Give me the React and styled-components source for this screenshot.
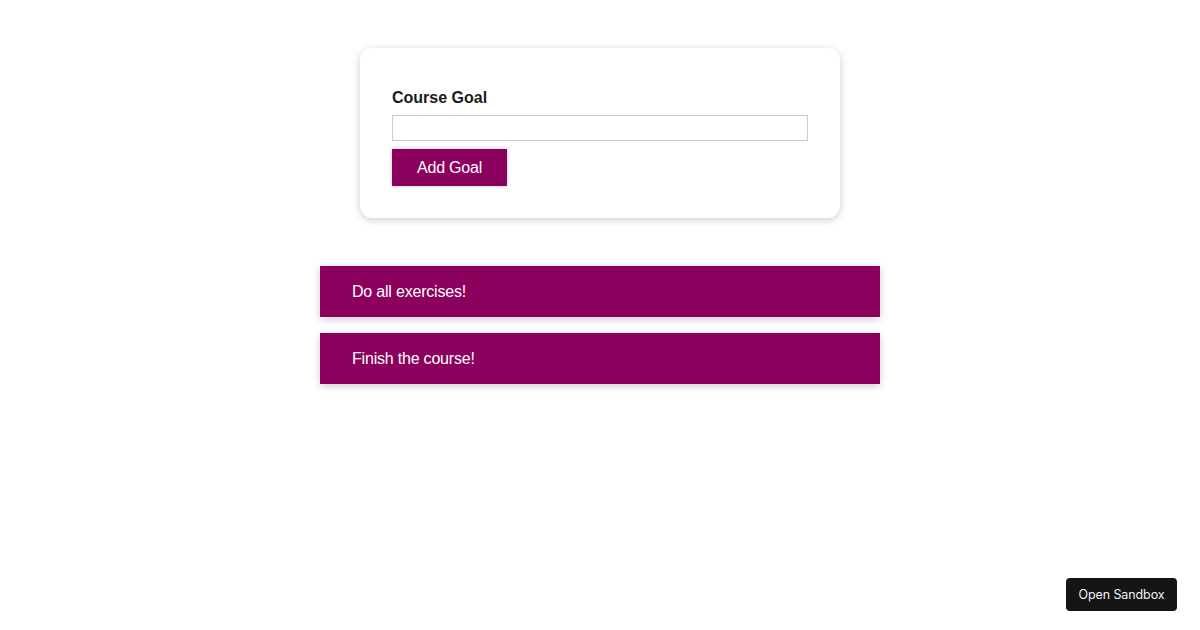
import styled, { createGlobalStyle } from "styled-components";
import { useState } from "react";

const GlobalStyle = createGlobalStyle`
  * {
    box-sizing: border-box;
  }

  html {
    font-family: "Liberation Sans", Arial, sans-serif;
    line-height: 19px;
    letter-spacing: -0.2px;
  }

  body {
    margin: 0;
    background: #ffffff;
  }
`;

export default function App() {
  const [goals, setGoals] = useState([
    { id: "g1", text: "Do all exercises!" },
    { id: "g2", text: "Finish the course!" },
  ]);
  const [value, setValue] = useState("");

  function onSubmit(event) {
    event.preventDefault();
    if (value.trim() === "") return;
    setGoals((prev) => [{ id: Math.random().toString(), text: value }, ...prev]);
    setValue("");
  }

  return (
    <>
      <GlobalStyle />
      <GoalForm onSubmit={onSubmit}>
        <FormControl>
          <Label htmlFor="goal">Course Goal</Label>
          <Input
            id="goal"
            type="text"
            value={value}
            onChange={(event) => setValue(event.target.value)}
          />
        </FormControl>
        <Button type="submit">Add Goal</Button>
      </GoalForm>
      <Goals>
        <GoalList>
          {goals.map(({ id, text }) => (
            <GoalItem key={id}>{text}</GoalItem>
          ))}
        </GoalList>
      </Goals>
      <SandboxButton type="button">Open Sandbox</SandboxButton>
    </>
  );
}

const GoalForm = styled.form`
  width: 30rem;
  max-width: 90%;
  margin: 3rem auto;
  padding: 2rem;
  border-radius: 12px;
  background: white;
  box-shadow: 0 2px 8px rgba(0, 0, 0, 0.2);
`;

const FormControl = styled.div`
  margin: 0.5rem 0;
`;

const Label = styled.label`
  display: block;
  font-weight: bold;
  letter-spacing: 0;
  color: #1a1a1a;
  margin-bottom: 0.5rem;
`;

const Input = styled.input`
  display: block;
  width: 100%;
  border: 1px solid #ccc;
  font: inherit;
  line-height: 1.5rem;
  height: 26px;
  padding: 0 0.25rem;
  outline: none;
`;

const Button = styled.button`
  font: inherit;
  line-height: 19px;
  letter-spacing: inherit;
  padding: 0.5rem 1.5rem;
  border: 1px solid #8b005d;
  color: white;
  background: #8b005d;
  box-shadow: 0 0 4px rgba(0, 0, 0, 0.26);
  cursor: pointer;
`;

const Goals = styled.section`
  width: 35rem;
  max-width: 90%;
  margin: 3rem auto;
`;

const GoalList = styled.ul`
  list-style: none;
  margin: 0;
  padding: 0;
`;

const GoalItem = styled.li`
  margin: 1rem 0;
  background: #8b005d;
  color: white;
  padding: 1rem 2rem;
  box-shadow: 0 2px 8px rgba(0, 0, 0, 0.2);
`;

const SandboxButton = styled.button`
  position: fixed;
  right: 23px;
  bottom: 19px;
  height: 33px;
  padding: 0 12.5px;
  border: none;
  border-radius: 4px;
  background: #151515;
  color: #f2f2f2;
  font-family: Inter, "Liberation Sans", sans-serif;
  font-size: 12.5px;
  letter-spacing: -0.1px;
  cursor: pointer;
`;
